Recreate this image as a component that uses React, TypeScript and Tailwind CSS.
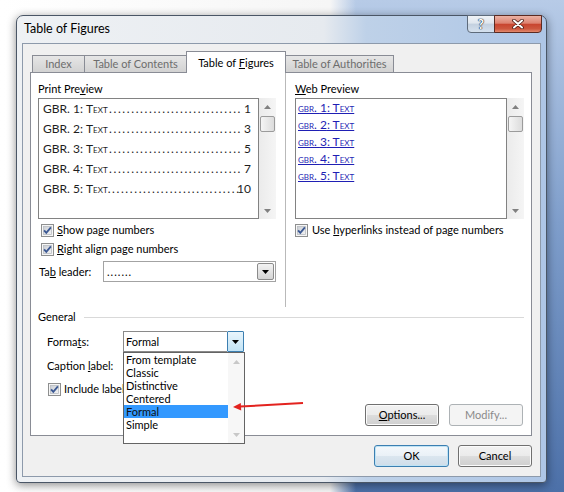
import React from 'react'

// Small filled triangle used by combo buttons and scroll arrows
function Tri({ dir = 'down', color = '#000' }: { dir?: 'up' | 'down'; color?: string }) {
  return (
    <svg width="7" height="4" viewBox="0 0 7 4" className="block">
      <path d={dir === 'down' ? 'M0 0H7L3.5 4Z' : 'M0 4H7L3.5 0Z'} fill={color} />
    </svg>
  )
}

function Check() {
  return (
    <svg width="13" height="13" viewBox="0 0 13 13" className="shrink-0 block">
      <defs>
        <linearGradient id="cbIn" x1="0" y1="0" x2="1" y2="1">
          <stop offset="0" stopColor="#c9cdd3" />
          <stop offset="1" stopColor="#f4f4f5" />
        </linearGradient>
      </defs>
      <rect x="0.5" y="0.5" width="12" height="12" fill="#f6f6f6" stroke="#8e8f8f" />
      <rect x="2.5" y="2.5" width="8" height="8" fill="url(#cbIn)" stroke="#b9bcc1" strokeWidth="0.8" />
      <path d="M3.1 6.3 L5.3 8.9 L9.9 3.4" fill="none" stroke="#3b5893" strokeWidth="1.8" />
    </svg>
  )
}

function VScroll({ disabled = false }: { disabled?: boolean }) {
  const c = disabled ? '#c8c8c8' : '#808080'
  return (
    <div
      className={
        disabled
          ? 'w-[16px] shrink-0 flex flex-col bg-[#f7f7f7]'
          : 'w-[17px] shrink-0 flex flex-col bg-[linear-gradient(to_right,#ebebeb,#f5f5f5)]'
      }
    >
      <div className="h-[17px] flex items-center justify-center">
        <Tri dir="up" color={c} />
      </div>
      {!disabled && (
        <div className="mx-px mt-px h-[16px] rounded-[2px] border border-[#9b9b9b] bg-[linear-gradient(to_right,#f5f5f5,#dcdcdc)]" />
      )}
      <div className="flex-1" />
      <div className="h-[17px] flex items-center justify-center">
        <Tri dir="down" color={c} />
      </div>
    </div>
  )
}

function Btn({ children, className, kind = 'normal' }: { children: React.ReactNode; className: string; kind?: 'normal' | 'default' | 'disabled' }) {
  const look =
    kind === 'default'
      ? 'border-[#3c7fb1] bg-[linear-gradient(to_bottom,#f4f8fb_0%,#eaf1f7_49%,#dbe6ef_50%,#cfdde9_100%)] shadow-[inset_0_0_0_1px_#bfe3f5]'
      : kind === 'disabled'
        ? 'border-[#adb2b5] bg-[#f4f4f4] text-[#8a8a8a]'
        : 'border-[#707070] bg-[linear-gradient(to_bottom,#f2f2f2_0%,#ebebeb_49%,#dddddd_50%,#cfcfcf_100%)] shadow-[inset_0_0_0_1px_#fbfbfb]'
  return <div className={`h-[22px] rounded-[3px] border flex items-center justify-center ${look} ${className}`}>{children}</div>
}

function Tab({ label, className }: { label: React.ReactNode; className: string }) {
  return (
    <div
      className={`h-[17px] mb-px border border-b-0 border-[#898c95] bg-[linear-gradient(to_bottom,#e6e6e6,#d2d2d2)] text-[#6d6d6d] flex items-center justify-center ${className}`}
    >
      {label}
    </div>
  )
}

// figure number, page, number of leader dots that fit before the page
const printItems: [number, string, number][] = [
  [1, '1', 30],
  [2, '3', 30],
  [3, '5', 30],
  [4, '7', 30],
  [5, '10', 30],
]
const formats = ['From template', 'Classic', 'Distinctive', 'Centered', 'Formal', 'Simple']

export default function App() {
  return (
    <div className="relative w-[564px] h-[492px] overflow-hidden pl-[16px] pt-[15px] bg-[linear-gradient(to_right,#ffffff_0px,#f6f6f6_330px,rgba(246,246,246,0)_356px),linear-gradient(to_bottom,#b7cbe7_0%,#7f9ecb_45%,#4c70a8_100%)] font-['Lato',sans-serif] text-[11px] leading-[16px] text-black">
      {/* Window */}
      <div className="w-[531px] h-[468px] flex flex-col rounded-t-[7px] rounded-b-[4px] border border-[#4a5666] bg-[linear-gradient(to_right,#eef1f4_0%,#e6eaef_58%,#bed1e8_66%,#aec6e6_100%)] shadow-[0_2px_10px_rgba(0,0,0,0.45)]">
        {/* Title bar */}
        <div className="h-[27px] shrink-0 flex items-start">
          <span className="ml-[7px] mt-[5px] text-[12.5px] leading-[16px]">Table of Figures</span>
          <div className="ml-auto mr-[4px] -mt-px flex">
            <div className="w-[28px] h-[18px] rounded-bl-[4px] border border-[#5e6b7b] bg-[linear-gradient(to_bottom,#f0f3f7_0%,#dfe6ee_45%,#c3d0df_50%,#d5e1ee_100%)] flex items-center justify-center">
              <span className="text-[13px] leading-[13px] font-bold text-white [text-shadow:0_0_1px_#18283c,0_0_1px_#18283c,0_0_1px_#18283c]">?</span>
            </div>
            <div className="-ml-px w-[48px] h-[18px] rounded-br-[4px] border border-[#5b2b22] bg-[linear-gradient(to_bottom,#ebb2a4_0%,#dd8270_45%,#c8452f_52%,#cd573e_80%,#e28a6e_100%)] flex items-center justify-center">
              <svg width="12" height="10" viewBox="0 0 12 10" className="block">
                <path d="M2 1.5 L10 8.5 M10 1.5 L2 8.5" stroke="#4a1a12" strokeWidth="3.6" strokeLinecap="round" />
                <path d="M2 1.5 L10 8.5 M10 1.5 L2 8.5" stroke="#ffffff" strokeWidth="2" strokeLinecap="round" />
              </svg>
            </div>
          </div>
        </div>

        {/* Client area */}
        <div className="mx-[5px] h-[434px] shrink-0 border border-[#8d9aab] bg-[#f0f0f0] flex flex-col pl-[7px] pr-[8px] pt-[7px] pb-[9px]">
          {/* Tabs */}
          <div className="relative z-10 flex items-end h-[22px] pl-[2px]">
            <Tab label="Index" className="w-[53px]" />
            <Tab label="Table of Contents" className="-ml-px w-[103px]" />
            <div className="-ml-px w-[100px] h-[22px] pt-px border border-b-0 border-[#898c95] bg-white flex items-center justify-center">
              <span>Table of <u>F</u>igures</span>
            </div>
            <Tab label="Table of Authorities" className="-ml-px w-[109px]" />
          </div>

          {/* Tab panel */}
          <div className="-mt-px h-[364px] shrink-0 border border-[#898c95] bg-white px-[7px] flex flex-col">
            <div className="h-[234px] shrink-0 flex">
              {/* Print preview */}
              <div className="w-[238px] pt-[8px] flex flex-col">
                <div className="h-[16px]">Print Pre<u>v</u>iew</div>
                <div className="mt-px h-[121px] flex">
                  <div className="flex-1 min-w-0 border border-[#828282] bg-white pl-[4px] pr-[7px]">
                    {printItems.map(([n, p, dots]) => (
                      <div key={n} className="h-[20px] flex items-center text-[12px] leading-[16px] text-[#1e1e1e] whitespace-nowrap">
                        <span>
                          GBR. {n}: <span className="[font-variant:small-caps]">Text</span>
                        </span>
                        <span className="flex-1 min-w-0 text-right tracking-[1.6px] pr-[2px]">{'.'.repeat(dots)}</span>
                        <span>{p}</span>
                      </div>
                    ))}
                  </div>
                  <VScroll />
                </div>
                <div className="mt-[3px] h-[16px] flex items-center pl-[3px]">
                  <Check />
                  <span className="ml-[3px]">
                    <u>S</u>how page numbers
                  </span>
                </div>
                <div className="mt-[3px] h-[16px] flex items-center pl-[3px]">
                  <Check />
                  <span className="ml-[3px]">
                    <u>R</u>ight align page numbers
                  </span>
                </div>
                <div className="mt-[4px] h-[21px] flex items-center">
                  <span className="w-[65px] pl-px">
                    Ta<u>b</u> leader:
                  </span>
                  <div className="w-[173px] h-[21px] border border-[#a3a3a3] bg-white flex items-center">
                    <span className="pl-[3px] tracking-[1px]">.......</span>
                    <div className="ml-auto mr-px h-[17px] w-[17px] border border-[#8b8b8b] rounded-[2px] bg-[linear-gradient(to_bottom,#f3f3f3,#d5d5d5)] flex items-center justify-center">
                      <Tri />
                    </div>
                  </div>
                </div>
              </div>

              <div className="ml-[9px] w-px bg-[#b9b9b9]" />

              {/* Web preview */}
              <div className="ml-[9px] flex-1 min-w-0 pt-[8px] flex flex-col">
                <div className="h-[16px]">
                  <u>W</u>eb Preview
                </div>
                <div className="mt-px h-[121px] flex">
                  <div className="flex-1 min-w-0 border border-[#828282] bg-white pl-[2px]">
                    {printItems.map(([n]) => (
                      <div key={n} className="h-[17px] flex items-center text-[12px] leading-[14px]">
                        <span className="text-[#1f1fb4] underline [font-variant:small-caps]">gbr. {n}: Text</span>
                      </div>
                    ))}
                  </div>
                  <VScroll />
                </div>
                <div className="mt-[3px] h-[16px] flex items-center">
                  <Check />
                  <span className="ml-[4px]">
                    Use <u>h</u>yperlinks instead of page numbers
                  </span>
                </div>
              </div>
            </div>

            {/* General */}
            <div className="mt-[2px] h-[16px] flex items-center">
              <span>General</span>
              <div className="ml-[8px] flex-1 h-px bg-[#d9d9d9]" />
            </div>
            <div className="mt-[6px] h-[21px] flex items-center pl-[9px]">
              <span className="w-[76px]">
                Forma<u>t</u>s:
              </span>
              <div className="relative w-[121px] h-[21px] flex">
                <div className="flex-1 h-full border border-r-0 border-[#8a8a8a] bg-white pl-[2px] flex items-center">Formal</div>
                <div className="w-[17px] h-full border border-[#3c7fb1] rounded-[1px] bg-[linear-gradient(to_bottom,#e8f5fc,#c2e3f5)] flex items-center justify-center">
                  <Tri />
                </div>
                {/* Open drop-down list */}
                <div className="absolute left-0 top-full z-20 w-[122px] h-[92px] border border-[#646464] bg-white flex">
                  <div className="flex-1 min-w-0">
                    {formats.map((f) => (
                      <div
                        key={f}
                        className={
                          f === 'Formal'
                            ? 'h-[13px] leading-[13px] pl-[2px] bg-[#3399ff] text-[#101010]'
                            : 'h-[13px] leading-[13px] pl-[2px]'
                        }
                      >
                        {f}
                      </div>
                    ))}
                  </div>
                  <VScroll disabled />
                </div>
              </div>
            </div>
            <div className="mt-[3px] h-[21px] flex items-center pl-[9px]">
              <span className="w-[76px]">
                Caption <u>l</u>abel:
              </span>
              <div className="w-[121px] h-[21px] border border-[#a3a3a3] bg-white" />
            </div>
            <div className="mt-[5px] h-[16px] flex items-center pl-[10px]">
              <Check />
              {/* the open list hides the rest of this label */}
              <span className="ml-[3px] w-[59px] overflow-hidden whitespace-nowrap">Include label and number</span>
            </div>
            <div className="mt-[7px] flex justify-end gap-[10px] pr-px">
              <Btn className="w-[74px]">
                <span>
                  <u>O</u>ptions...
                </span>
              </Btn>
              <Btn className="w-[74px]" kind="disabled">
                Modify...
              </Btn>
            </div>
          </div>

          {/* Dialog buttons */}
          <div className="mt-[9px] flex justify-end gap-[9px]">
            <Btn className="w-[75px]" kind="default">
              OK
            </Btn>
            <Btn className="w-[74px]">Cancel</Btn>
          </div>
        </div>
      </div>

      {/* Red annotation arrow, drawn over the list */}
      <svg className="absolute z-30 left-[228px] top-[396px]" width="80" height="18" viewBox="0 0 80 18">
        <line x1="75" y1="7" x2="12" y2="10.6" stroke="#e3231f" strokeWidth="2" />
        <path d="M5 11 L12.8 7 L13.2 14.5 Z" fill="#e3231f" />
      </svg>
    </div>
  )
}
